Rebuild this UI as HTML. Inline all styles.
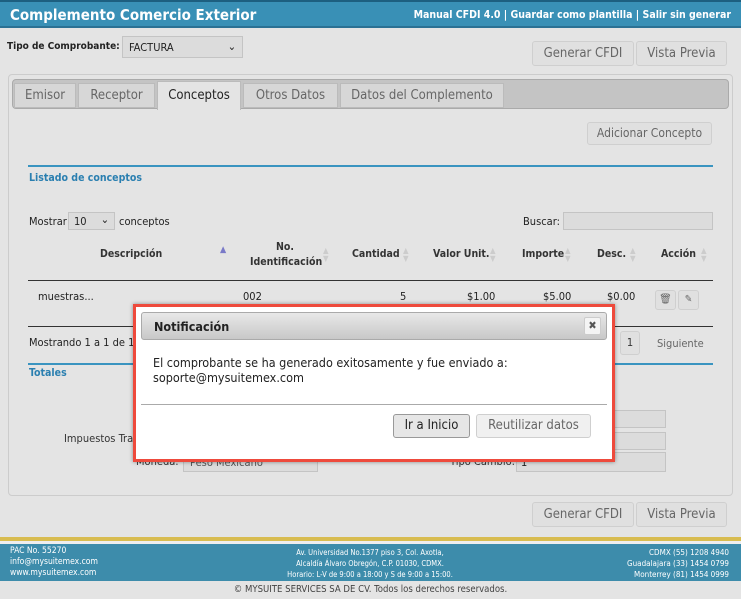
<!DOCTYPE html><html><head><style>
*{box-sizing:border-box;margin:0;padding:0}
body{width:741px;height:599px;overflow:hidden;background:#e4e4e4;font-family:"DejaVu Sans Condensed","Liberation Sans",sans-serif;font-size:11px;color:#222;position:relative}
.a{position:absolute}
.btn{position:absolute;background:#e0e0e0;border:1px solid #cfcfcf;border-radius:3px;color:#666;font-size:13px;text-align:center}
.hd{font-weight:bold;font-size:11px;color:#333;text-align:center}
.inp{position:absolute;background:#dcdcdc;border:1px solid #c4c4c4}
.ar{position:absolute;top:247px;color:#ccc;font-size:8px;line-height:8px}
</style></head><body>
<div class="a" style="left:0;top:0;width:741px;height:28px;background:#3990b6;border-top:2px solid #1d5f80;border-bottom:2px solid #2b7194"></div>
<div class="a" style="left:10px;top:6px;color:#fff;font-size:15px;font-weight:bold">Complemento Comercio Exterior</div>
<div class="a" style="right:10px;top:9px;color:#fff;font-size:10.5px;font-weight:bold">Manual CFDI 4.0 | Guardar como plantilla | Salir sin generar</div>
<div class="a" style="left:7px;top:41px;font-weight:bold;font-size:10px">Tipo de Comprobante:</div>
<div class="inp" style="left:122px;top:36px;width:121px;height:22px;padding:4px 6px;font-size:11px">FACTURA<span style="position:absolute;right:6px;top:3px">⌄</span></div>
<div class="btn" style="left:532px;top:41px;width:102px;height:25px;line-height:23px">Generar CFDI</div>
<div class="btn" style="left:636px;top:41px;width:91px;height:25px;line-height:23px">Vista Previa</div>
<div class="a" style="left:8px;top:74px;width:725px;height:422px;border:1px solid #ccc;border-radius:4px"></div>
<div class="a" style="left:12px;top:79px;width:717px;height:30px;background:#c4c4c4;border:1px solid #aaa;border-radius:4px"></div>
<div class="a" style="left:14px;top:83px;width:62px;height:25px;background:#d7d7d7;border:1px solid #bbb;color:#666;font-size:13px;text-align:center;line-height:23px">Emisor</div>
<div class="a" style="left:78px;top:83px;width:77px;height:25px;background:#d7d7d7;border:1px solid #bbb;color:#666;font-size:13px;text-align:center;line-height:23px">Receptor</div>
<div class="a" style="left:157px;top:81px;width:84px;height:29px;background:#e4e4e4;border:1px solid #bbb;border-bottom:none;color:#222;font-size:13px;text-align:center;line-height:27px">Conceptos</div>
<div class="a" style="left:243px;top:83px;width:95px;height:25px;background:#d7d7d7;border:1px solid #bbb;color:#666;font-size:13px;text-align:center;line-height:23px">Otros Datos</div>
<div class="a" style="left:340px;top:83px;width:164px;height:25px;background:#d7d7d7;border:1px solid #bbb;color:#666;font-size:13px;text-align:center;line-height:23px">Datos del Complemento</div>
<div class="btn" style="left:587px;top:122px;width:125px;height:23px;line-height:21px;font-size:12px">Adicionar Concepto</div>
<div class="a" style="left:28px;top:165px;width:685px;height:2px;background:#3a94c0"></div>
<div class="a" style="left:29px;top:172px;color:#2a7fb0;font-weight:bold;font-size:10.5px">Listado de conceptos</div>
<div class="a" style="left:29px;top:215px">Mostrar</div>
<div class="inp" style="left:68px;top:212px;width:47px;height:18px;padding:2px 5px">10<span style="position:absolute;right:5px;top:0">⌄</span></div>
<div class="a" style="left:119px;top:215px">conceptos</div>
<div class="a" style="left:523px;top:215px">Buscar:</div>
<div class="inp" style="left:563px;top:212px;width:150px;height:18px"></div>
<div class="a hd" style="left:100px;top:248px;font-size:10.5px">Descripción</div>
<div class="a" style="left:220px;top:245px;color:#7a7ac8;font-size:9px">▲</div>
<div class="a hd" style="left:250px;top:240px;width:70px;line-height:15px;font-size:10.5px">No.<br>Identificación</div>
<div class="a hd" style="left:352px;top:248px;font-size:10.5px">Cantidad</div>
<div class="a hd" style="left:433px;top:248px;font-size:10.5px">Valor Unit.</div>
<div class="a hd" style="left:522px;top:248px;font-size:10.5px">Importe</div>
<div class="a hd" style="left:597px;top:248px;font-size:10.5px">Desc.</div>
<div class="a hd" style="left:661px;top:248px;font-size:10.5px">Acción</div>
<div class="ar" style="left:323px">▲<br>▼</div>
<div class="ar" style="left:403px">▲<br>▼</div>
<div class="ar" style="left:490px">▲<br>▼</div>
<div class="ar" style="left:565px">▲<br>▼</div>
<div class="ar" style="left:630px">▲<br>▼</div>
<div class="ar" style="left:701px">▲<br>▼</div>
<div class="a" style="left:28px;top:280px;width:685px;height:1px;background:#333"></div>
<div class="a" style="left:38px;top:290px">muestras...</div>
<div class="a" style="left:243px;top:290px">002</div>
<div class="a" style="left:400px;top:290px">5</div>
<div class="a" style="left:467px;top:290px">$1.00</div>
<div class="a" style="left:543px;top:290px">$5.00</div>
<div class="a" style="left:607px;top:290px">$0.00</div>
<div class="btn" style="left:655px;top:290px;width:21px;height:20px;font-size:10px;line-height:18px">🗑</div>
<div class="btn" style="left:678px;top:290px;width:21px;height:20px;font-size:10px;line-height:18px">✎</div>
<div class="a" style="left:28px;top:326px;width:685px;height:1px;background:#333"></div>
<div class="a" style="left:29px;top:336px">Mostrando 1 a 1 de 1</div>
<div class="btn" style="left:620px;top:331px;width:20px;height:24px;line-height:22px;font-size:11px;color:#333">1</div>
<div class="a" style="left:657px;top:337px;color:#666">Siguiente</div>
<div class="a" style="left:28px;top:363px;width:685px;height:2px;background:#3a94c0"></div>
<div class="a" style="left:29px;top:367px;color:#2a7fb0;font-weight:bold;font-size:10.5px">Totales</div>
<div class="a" style="left:64px;top:432px;color:#333">Impuestos Tra</div>
<div class="a" style="left:136px;top:455px;color:#333">Moneda:</div>
<div class="inp" style="left:183px;top:452px;width:135px;height:20px;padding:3px 6px;color:#555">Peso Mexicano</div>
<div class="a" style="left:450px;top:455px;color:#333">Tipo Cambio:</div>
<div class="inp" style="left:516px;top:452px;width:150px;height:20px;padding:3px 4px">1</div>
<div class="inp" style="left:600px;top:410px;width:66px;height:18px"></div>
<div class="inp" style="left:600px;top:432px;width:66px;height:18px"></div>
<div class="btn" style="left:532px;top:502px;width:102px;height:25px;line-height:23px">Generar CFDI</div>
<div class="btn" style="left:636px;top:502px;width:91px;height:25px;line-height:23px">Vista Previa</div>
<div class="a" style="left:133px;top:304px;width:482px;height:158px;border:3px solid #ee4a3c;box-shadow:0 0 4px rgba(0,0,0,.4);background:#fff"></div>
<div class="a" style="left:141px;top:312px;width:466px;height:28px;background:linear-gradient(#e8e8e8,#c8c8c8);border:1px solid #aaa;border-radius:3px"></div>
<div class="a" style="left:154px;top:319px;font-weight:bold;font-size:12.5px">Notificación</div>
<div class="a" style="left:584px;top:317px;width:17px;height:18px;background:#f4f4f4;border:1px solid #ccc;border-radius:2px;font-size:11px;text-align:center;line-height:16px;color:#555;font-weight:bold">✖</div>
<div class="a" style="left:153px;top:355px;font-size:12.5px;line-height:15px">El comprobante se ha generado exitosamente y fue enviado a:<br>soporte@mysuitemex.com</div>
<div class="a" style="left:141px;top:404px;width:466px;height:1px;background:#aaa"></div>
<div class="btn" style="left:393px;top:414px;width:77px;height:24px;line-height:22px;color:#222;background:#e6e6e6;border-color:#999">Ir a Inicio</div>
<div class="btn" style="left:476px;top:414px;width:115px;height:24px;line-height:22px;background:#f0f0f0">Reutilizar datos</div>
<div class="a" style="left:0;top:537px;width:741px;height:4px;background:#d8bc50"></div>
<div class="a" style="left:0;top:541px;width:741px;height:3px;background:#eee"></div>
<div class="a" style="left:0;top:544px;width:741px;height:37px;background:#3d8cab"></div>
<div class="a" style="left:10px;top:546px;color:#fff;font-size:8.5px;line-height:11px">PAC No. 55270<br>info@mysuitemex.com<br>www.mysuitemex.com</div>
<div class="a" style="left:270px;top:547px;width:200px;text-align:center;color:#fff;font-size:7.5px;line-height:11px;white-space:nowrap">Av. Universidad No.1377 piso 3, Col. Axotla,<br>Alcaldía Álvaro Obregón, C.P. 01030, CDMX.<br>Horario: L-V de 9:00 a 18:00 y S de 9:00 a 15:00.</div>
<div class="a" style="right:12px;top:547px;text-align:right;color:#fff;font-size:8px;line-height:11px">CDMX (55) 1208 4940<br>Guadalajara (33) 1454 0799<br>Monterrey (81) 1454 0999</div>
<div class="a" style="left:0;top:584px;width:741px;text-align:center;color:#444;font-size:9.5px">© MYSUITE SERVICES SA DE CV. Todos los derechos reservados.</div>
</body></html>
